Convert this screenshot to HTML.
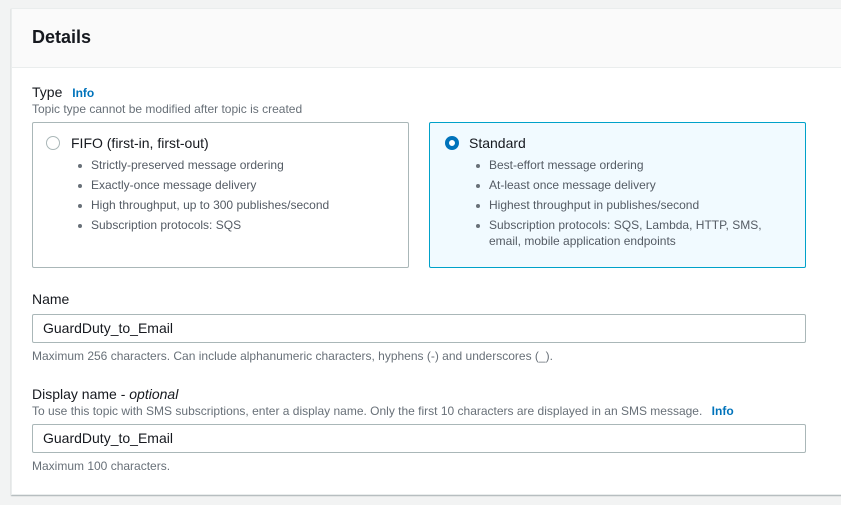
<!DOCTYPE html>
<html><head><meta charset="utf-8"><style>
body{margin:0;width:841px;height:505px;background:#f2f3f3;font-family:"Liberation Sans",sans-serif;position:relative;overflow:hidden;color:#16191f}
.p{position:absolute;left:11px;top:8px;width:840px;height:485px;background:#fff;border:1px solid #eaeded;border-right:none;box-shadow:0 1px 1px rgba(0,28,36,.3)}
.h{position:absolute;left:0;top:0;right:0;height:58px;background:#fafafa;border-bottom:1px solid #eaeded}
.a{position:absolute;white-space:nowrap}
.t{font-size:14px;line-height:16px}
.s{font-size:12px;line-height:14px;color:#687078}
.i{color:#0073bb;font-weight:bold;font-size:12px}
.box{position:absolute;top:122px;width:375px;height:144px;border:1px solid #aab7b8;border-radius:2px}
ul{position:absolute;margin:0;padding:0 0 0 18px;font-size:12px;line-height:20px;color:#545b64;list-style:none}
li{position:relative}
li:before{content:"";position:absolute;left:-13px;top:9px;width:4px;height:4px;border-radius:50%;background:#687078}
.in{position:absolute;left:32px;width:772px;height:27px;border:1px solid #aab7b8;border-radius:2px;font-size:14px;line-height:27px;text-indent:10px}
</style></head><body>
<div class="p"><div class="h"></div></div>
<div class="a" style="left:32px;top:27px;font-size:18px;font-weight:bold;line-height:20px">Details</div>
<div class="a t" style="left:32px;top:84px">Type <span class="i" style="margin-left:6px">Info</span></div>
<div class="a s" style="left:32px;top:102px">Topic type cannot be modified after topic is created</div>
<div class="box" style="left:32px"></div>
<div class="box" style="left:429px;background:#f1faff;border-color:#00a1c9"></div>
<div class="a" style="left:46px;top:136px;width:12px;height:12px;border:1px solid #aab7b8;border-radius:50%"></div>
<div class="a t" style="left:71px;top:135px">FIFO (first-in, first-out)</div>
<ul style="left:73px;top:155px"><li>Strictly-preserved message ordering</li><li>Exactly-once message delivery</li><li>High throughput, up to 300 publishes/second</li><li>Subscription protocols: SQS</li></ul>
<div class="a" style="left:445px;top:136px;width:6px;height:6px;border:4px solid #0073bb;border-radius:50%;background:#fff"></div>
<div class="a t" style="left:469px;top:135px">Standard</div>
<ul style="left:471px;top:155px"><li>Best-effort message ordering</li><li>At-least once message delivery</li><li>Highest throughput in publishes/second</li><li style="line-height:16px;padding-top:2px">Subscription protocols: SQS, Lambda, HTTP, SMS,<br>email, mobile application endpoints</li></ul>
<div class="a t" style="left:32px;top:291px">Name</div>
<div class="in" style="top:314px">GuardDuty_to_Email</div>
<div class="a s" style="left:32px;top:349px">Maximum 256 characters. Can include alphanumeric characters, hyphens (-) and underscores (_).</div>
<div class="a t" style="left:32px;top:386px">Display name - <i>optional</i></div>
<div class="a s" style="left:32px;top:404px">To use this topic with SMS subscriptions, enter a display name. Only the first 10 characters are displayed in an SMS message. <span class="i" style="margin-left:6px">Info</span></div>
<div class="in" style="top:424px">GuardDuty_to_Email</div>
<div class="a s" style="left:32px;top:459px">Maximum 100 characters.</div>
</body></html>
